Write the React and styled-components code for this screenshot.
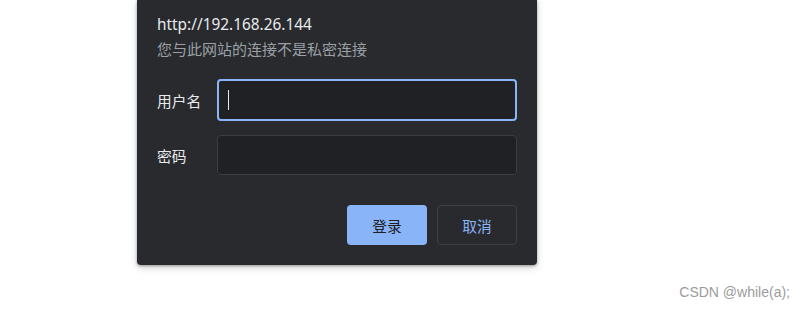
import React from 'react';
import styled, { createGlobalStyle } from 'styled-components';

const GlobalStyle = createGlobalStyle`
  html, body {
    margin: 0;
    padding: 0;
    background: #ffffff;
  }
  body {
    font-family: "Noto Sans", "Noto Sans CJK SC", sans-serif;
  }
`;

const Page = styled.div`
  width: 806px;
  height: 309px;
  display: flex;
  flex-direction: column;
  overflow: hidden;
`;

const Dialog = styled.div`
  box-sizing: border-box;
  width: 400px;
  height: 265px;
  margin-left: 137px;
  padding: 15px 20px 20px;
  background: #292a2d;
  border-radius: 0 0 4px 4px;
  box-shadow: 0 1px 3px rgba(0, 0, 0, 0.35), 0 3px 8px rgba(0, 0, 0, 0.15);
  display: flex;
  flex-direction: column;
`;

const Title = styled.div`
  font-size: 15.4px;
  line-height: 20px;
  color: #e8eaed;
`;

const Subtitle = styled.div`
  margin-top: 4px;
  font-size: 15px;
  line-height: 20px;
  color: #9aa0a6;
`;

const Form = styled.div`
  margin-top: 20px;
  display: flex;
  flex-direction: column;
  gap: 14px;
`;

const Row = styled.div`
  display: flex;
  align-items: center;
`;

const Label = styled.div`
  width: 60px;
  flex-shrink: 0;
  font-size: 14.7px;
  color: #e8eaed;
`;

const Field = styled.div`
  box-sizing: border-box;
  width: 300px;
  height: ${p => (p.$focused ? '42px' : '40px')};
  background: #202124;
  border: ${p => (p.$focused ? '2px solid #8ab4f8' : '1px solid #3c3d41')};
  border-radius: 4px;
  display: flex;
  align-items: center;
  padding-left: ${p => (p.$focused ? '9px' : '10px')};
`;

const Caret = styled.span`
  width: 1px;
  height: 20px;
  background: #e8eaed;
`;

const Actions = styled.div`
  margin-top: auto;
  display: flex;
  justify-content: flex-end;
  gap: 10px;
`;

const Button = styled.button`
  box-sizing: border-box;
  width: 80px;
  height: 40px;
  border-radius: 4px;
  font-family: "Noto Sans CJK SC", sans-serif;
  font-size: 14.7px;
  cursor: pointer;
  background: ${p => (p.$primary ? '#8ab4f8' : '#292a2d')};
  color: ${p => (p.$primary ? '#202124' : '#8ab4f8')};
  border: ${p => (p.$primary ? 'none' : '1px solid #3c4043')};
`;

const Footer = styled.div`
  flex: 1;
  display: flex;
  justify-content: flex-end;
  align-items: center;
  padding: 9px 16px 0 0;
  font-family: "Liberation Sans", Arial, sans-serif;
  font-size: 14px;
  color: #9c9c9c;
`;

export default function App() {
  return (
    <Page>
      <GlobalStyle />
      <Dialog>
        <Title>http://192.168.26.144</Title>
        <Subtitle>您与此网站的连接不是私密连接</Subtitle>
        <Form>
          <Row>
            <Label>用户名</Label>
            <Field $focused>
              <Caret />
            </Field>
          </Row>
          <Row>
            <Label>密码</Label>
            <Field />
          </Row>
        </Form>
        <Actions>
          <Button $primary>登录</Button>
          <Button>取消</Button>
        </Actions>
      </Dialog>
      <Footer>CSDN @while(a);</Footer>
    </Page>
  );
}
